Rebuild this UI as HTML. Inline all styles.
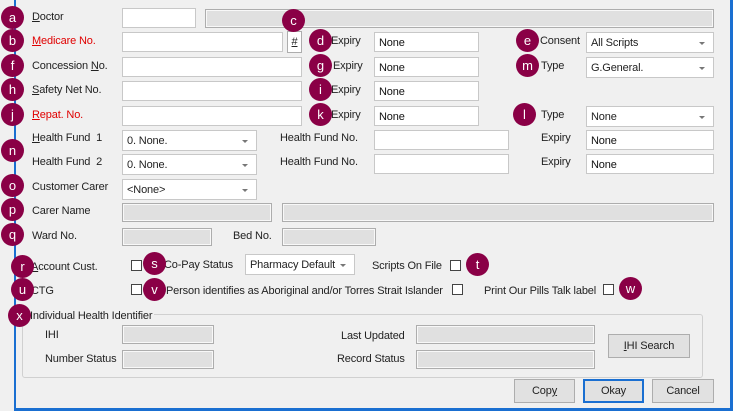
<!DOCTYPE html>
<html><head><meta charset="utf-8"><style>
*{box-sizing:border-box;margin:0;padding:0}
body{width:733px;height:411px;background:#f0f0f0;position:relative;overflow:hidden;font-family:"Liberation Sans",sans-serif;font-size:11px;letter-spacing:-0.15px;color:#222}
div,span{position:absolute}
.l{white-space:nowrap;line-height:14px;margin-top:1px}
.red{color:#e00000}
.in{background:#fff;border:1px solid #c8c8c8;padding-left:4px;line-height:20px;color:#111}
.g{background:#e0e0e0;border:1px solid #adadad;box-shadow:inset 0 0 0 1px #f8f8f8}
.sel{background:#fff;border:1px solid #c8c8c8;padding-left:4px;line-height:20px}
.sel:after{content:"";position:absolute;right:8px;top:9px;border-left:3px solid transparent;border-right:3px solid transparent;border-top:3px solid #777}
.b{width:23px;height:23px;border-radius:50%;background:#8a0046;color:#fff;font-size:13px;letter-spacing:0;text-align:center;line-height:23px}
.cb{width:11px;height:11px;background:#fff;border:1px solid #444}
.btn{background:#e1e1e1;border:1px solid #adadad;text-align:center;line-height:23px}
u{text-decoration:underline}
</style></head><body>
<div style="left:14px;top:0;width:2px;height:411px;background:#1a6fd1"></div>
<div style="left:730px;top:0;width:3px;height:411px;background:#1a6fd1"></div>
<div style="left:14px;top:408px;width:719px;height:3px;background:#1a6fd1"></div>

<div class="l" style="left:32px;top:9px"><u>D</u>octor</div>
<div class="in" style="left:122px;top:8px;width:74px;height:20px"></div>
<div class="g" style="left:205px;top:9px;width:509px;height:19px"></div>

<div class="l red" style="left:32px;top:33px"><u>M</u>edicare No.</div>
<div class="in" style="left:122px;top:32px;width:161px;height:20px"></div>
<div class="btn" style="left:287px;top:31px;width:15px;height:22px;background:#fff;line-height:20px"><u>#</u></div>
<div class="l" style="left:331px;top:33px">Expiry</div>
<div class="in" style="left:374px;top:32px;width:105px;height:20px">None</div>
<div class="l" style="left:540px;top:33px">Consent</div>
<div class="sel" style="left:586px;top:32px;width:128px;height:21px">All Scripts</div>

<div class="l" style="left:32px;top:58px">Concession <u>N</u>o.</div>
<div class="in" style="left:122px;top:57px;width:180px;height:20px"></div>
<div class="l" style="left:333px;top:58px">Expiry</div>
<div class="in" style="left:374px;top:57px;width:105px;height:20px">None</div>
<div class="l" style="left:541px;top:58px">Type</div>
<div class="sel" style="left:586px;top:57px;width:128px;height:21px">G.General.</div>

<div class="l" style="left:32px;top:82px"><u>S</u>afety Net No.</div>
<div class="in" style="left:122px;top:81px;width:180px;height:20px"></div>
<div class="l" style="left:331px;top:82px">Expiry</div>
<div class="in" style="left:374px;top:81px;width:105px;height:20px">None</div>

<div class="l red" style="left:32px;top:107px"><u>R</u>epat. No.</div>
<div class="in" style="left:122px;top:106px;width:180px;height:20px"></div>
<div class="l" style="left:331px;top:107px">Expiry</div>
<div class="in" style="left:374px;top:106px;width:105px;height:20px">None</div>
<div class="l" style="left:541px;top:107px">Type</div>
<div class="sel" style="left:586px;top:106px;width:128px;height:21px">None</div>

<div class="l" style="left:32px;top:130px"><u>H</u>ealth Fund &nbsp;1</div>
<div class="sel" style="left:122px;top:130px;width:135px;height:21px">0. None.</div>
<div class="l" style="left:280px;top:130px">Health Fund No.</div>
<div class="in" style="left:374px;top:130px;width:135px;height:20px"></div>
<div class="l" style="left:541px;top:130px">Expiry</div>
<div class="in" style="left:586px;top:130px;width:128px;height:20px">None</div>

<div class="l" style="left:32px;top:154px">Health Fund &nbsp;2</div>
<div class="sel" style="left:122px;top:154px;width:135px;height:21px">0. None.</div>
<div class="l" style="left:280px;top:154px">Health Fund No.</div>
<div class="in" style="left:374px;top:154px;width:135px;height:20px"></div>
<div class="l" style="left:541px;top:154px">Expiry</div>
<div class="in" style="left:586px;top:154px;width:128px;height:20px">None</div>

<div class="l" style="left:32px;top:179px">Customer Carer</div>
<div class="sel" style="left:122px;top:179px;width:135px;height:21px">&lt;None&gt;</div>

<div class="l" style="left:32px;top:203px">Carer Name</div>
<div class="g" style="left:122px;top:203px;width:150px;height:19px"></div>
<div class="g" style="left:282px;top:203px;width:432px;height:19px"></div>

<div class="l" style="left:32px;top:228px">Ward No.</div>
<div class="g" style="left:122px;top:228px;width:90px;height:18px"></div>
<div class="l" style="left:233px;top:228px">Bed No.</div>
<div class="g" style="left:282px;top:228px;width:94px;height:18px"></div>

<div class="l" style="left:31px;top:259px"><u>A</u>ccount Cust.</div>
<div class="cb" style="left:131px;top:260px"></div>
<div class="l" style="left:164px;top:257px">Co-Pay Status</div>
<div class="sel" style="left:245px;top:254px;width:110px;height:21px">Pharmacy Default</div>
<div class="l" style="left:372px;top:258px">Scripts On File</div>
<div class="cb" style="left:450px;top:260px"></div>

<div class="l" style="left:31px;top:283px">CTG</div>
<div class="cb" style="left:131px;top:284px"></div>
<div class="l" style="left:166px;top:283px">Person identifies as Aboriginal and/or Torres Strait Islander</div>
<div class="cb" style="left:452px;top:284px"></div>
<div class="l" style="left:484px;top:283px">Print Our Pills Talk label</div>
<div class="cb" style="left:603px;top:284px"></div>

<div style="left:22px;top:314px;width:681px;height:64px;border:1px solid #d0d0d0;border-radius:3px"></div>
<div class="l" style="left:30px;top:308px;background:#f0f0f0;padding-right:2px">Individual Health Identifier</div>
<div class="l" style="left:45px;top:327px">IHI</div>
<div class="g" style="left:122px;top:325px;width:92px;height:19px"></div>
<div class="l" style="left:341px;top:328px">Last Updated</div>
<div class="g" style="left:416px;top:325px;width:179px;height:19px"></div>
<div class="btn" style="left:608px;top:334px;width:82px;height:24px;line-height:23px"><u>I</u>HI Search</div>
<div class="l" style="left:45px;top:351px">Number Status</div>
<div class="g" style="left:122px;top:350px;width:92px;height:19px"></div>
<div class="l" style="left:337px;top:351px">Record Status</div>
<div class="g" style="left:416px;top:350px;width:179px;height:19px"></div>

<div class="btn" style="left:514px;top:379px;width:61px;height:24px">Cop<u>y</u></div>
<div class="btn" style="left:583px;top:379px;width:61px;height:24px;border:2px solid #1a6fd1;line-height:21px">Okay</div>
<div class="btn" style="left:652px;top:379px;width:62px;height:24px">Cancel</div>

<div class="b" style="left:1px;top:6px">a</div>
<div class="b" style="left:1px;top:29px">b</div>
<div class="b" style="left:282px;top:9px">c</div>
<div class="b" style="left:309px;top:29px">d</div>
<div class="b" style="left:516px;top:29px">e</div>
<div class="b" style="left:1px;top:54px">f</div>
<div class="b" style="left:309px;top:54px">g</div>
<div class="b" style="left:516px;top:54px">m</div>
<div class="b" style="left:1px;top:78px">h</div>
<div class="b" style="left:309px;top:78px">i</div>
<div class="b" style="left:1px;top:103px">j</div>
<div class="b" style="left:309px;top:103px">k</div>
<div class="b" style="left:513px;top:103px">l</div>
<div class="b" style="left:1px;top:139px">n</div>
<div class="b" style="left:1px;top:174px">o</div>
<div class="b" style="left:1px;top:198px">p</div>
<div class="b" style="left:1px;top:223px">q</div>
<div class="b" style="left:11px;top:255px">r</div>
<div class="b" style="left:143px;top:252px">s</div>
<div class="b" style="left:466px;top:253px">t</div>
<div class="b" style="left:11px;top:278px">u</div>
<div class="b" style="left:143px;top:278px">v</div>
<div class="b" style="left:619px;top:277px">w</div>
<div class="b" style="left:8px;top:304px">x</div>
</body></html>
